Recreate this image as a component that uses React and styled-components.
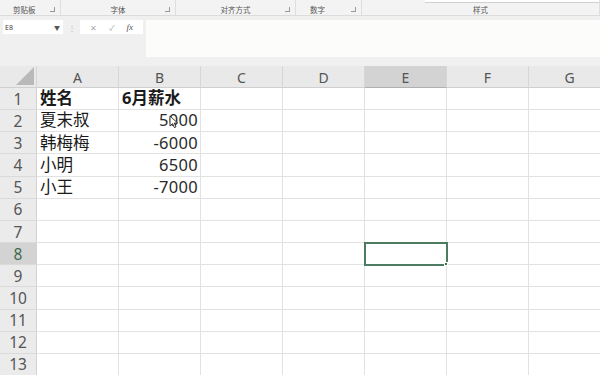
import React from "react";
import styled, { createGlobalStyle } from "styled-components";

const GlobalStyle = createGlobalStyle`
  html, body {
    margin: 0;
    padding: 0;
    width: 600px;
    height: 375px;
    overflow: hidden;
    background: #f0f0f0;
  }
  * { box-sizing: border-box; }
`;

const FONT = `"Noto Sans", "Noto Sans CJK SC", sans-serif`;
const ROW_H = 22.17;

const Window = styled.div`
  width: 600px;
  height: 375px;
  overflow: hidden;
  font-family: ${FONT};
  background: #f0f0f0;
`;

const Ribbon = styled.div`
  display: flex;
  height: 16px;
  background: #f3f3f3;
  border-bottom: 1px solid #dcdcdc;
  position: relative;
`;

const RibbonTop = styled.div`
  position: absolute;
  top: 0;
  left: 425px;
  right: 0;
  height: 3px;
  background: #fff;
  border-bottom: 1px solid #d0d0d0;
`;

const Group = styled.div`
  position: relative;
  width: ${p => p.w}px;
  border-right: 1px solid #dedede;
  display: flex;
  align-items: center;
  justify-content: ${p => (p.center ? "center" : "flex-start")};
  padding-left: ${p => p.pad || 0}px;
  font-size: 7.5px;
  color: #555;
  padding-top: 3px;
`;

const Launcher = styled.span`
  position: absolute;
  right: 5px;
  top: 7px;
  width: 5px;
  height: 5px;
  border-right: 1px solid #999;
  border-bottom: 1px solid #999;
`;

const FormulaRow = styled.div`
  display: flex;
  align-items: flex-start;
  height: 50px;
  padding: 4px 0 0 3px;
`;

const NameBox = styled.div`
  width: 60px;
  height: 14px;
  background: #fff;
  display: flex;
  align-items: center;
  justify-content: space-between;
  padding: 0 3px 0 2px;
  font-size: 7px;
  color: #444;
`;

const Caret = styled.span`
  font-size: 6px;
  color: #555;
`;

const Dots = styled.div`
  width: 17px;
  height: 14px;
  display: flex;
  align-items: center;
  justify-content: center;
  color: #b5b5b5;
  font-size: 8px;
`;

const ButtonsBox = styled.div`
  width: 63px;
  height: 14px;
  background: #fff;
  display: flex;
  align-items: center;
  justify-content: space-around;
  padding: 0 4px;
  color: #aaa;
  font-size: 8px;
`;

const Fx = styled.span`
  font-family: "Liberation Serif", serif;
  font-style: italic;
  color: #555;
  font-size: 9px;
`;

const FormulaInput = styled.div`
  margin-left: 3px;
  flex: 1;
  height: 37px;
  background: #fcfcfb;
`;

const Sheet = styled.div`
  display: grid;
  grid-template-columns: 37px repeat(7, 82px);
  grid-template-rows: 22px repeat(13, ${ROW_H}px);
  background: #fff;
  position: relative;
`;

const Corner = styled.div`
  background: #e9e9e9;
  border-right: 1px solid #d6d6d6;
  border-bottom: 1px solid #cfcfcf;
  position: relative;
  &::after {
    content: "";
    position: absolute;
    right: 2px;
    bottom: 2px;
    border-style: solid;
    border-width: 0 0 18px 18px;
    border-color: transparent transparent #b9b9b9 transparent;
  }
`;

const ColHead = styled.div`
  background: ${p => (p.active ? "#d3d3d3" : "#e9e9e9")};
  border-right: 1px solid #d6d6d6;
  border-bottom: 1px solid ${p => (p.active ? "#b0b0b0" : "#cfcfcf")};
  display: flex;
  align-items: center;
  justify-content: center;
  font-size: 14px;
  color: #555;
  padding-top: 1px;
`;

const RowHead = styled.div`
  background: ${p => (p.active ? "#d3d3d3" : "#ebebeb")};
  border-right: 1px solid #d2d2d2;
  border-bottom: 1px solid #dadada;
  display: flex;
  align-items: center;
  justify-content: center;
  font-size: 15.5px;
  color: ${p => (p.active ? "#3f6b54" : "#555")};
`;

const Cell = styled.div`
  position: relative;
  border-right: 1px solid #e2e2e2;
  border-bottom: 1px solid #e2e2e2;
  display: flex;
  align-items: center;
  justify-content: ${p => (p.num ? "flex-end" : "flex-start")};
  padding: 0 2px 0 3px;
  font-size: 16.5px;
  font-weight: ${p => (p.bold ? 700 : 400)};
  color: ${p => (p.num ? "#2a2a2a" : "#1a1a1a")};
  letter-spacing: ${p => (p.num ? "0.3px" : "0")};
  white-space: nowrap;
  line-height: 1;
  ${p =>
    p.selected &&
    `
    outline: 2px solid #4d7b62;
    outline-offset: -1px;
    z-index: 2;
  `}
`;

const Handle = styled.span`
  position: absolute;
  right: -2px;
  bottom: -2px;
  width: 4px;
  height: 4px;
  background: #3d6b52;
  border: 1px solid #fff;
`;

const Pointer = styled.svg`
  position: absolute;
  left: 50px;
  top: 5px;
  width: 10px;
  height: 14px;
`;

const cols = ["A", "B", "C", "D", "E", "F", "G"];
const data = [
  ["姓名", "6月薪水", true],
  ["夏末叔", "5000"],
  ["韩梅梅", "-6000"],
  ["小明", "6500"],
  ["小王", "-7000"],
];

export default function App() {
  const rows = [];
  for (let r = 1; r <= 13; r++) {
    const d = data[r - 1];
    rows.push(
      <RowHead key={`h${r}`} active={r === 8}>
        {r}
      </RowHead>
    );
    cols.forEach((c, ci) => {
      let content = null;
      let num = false;
      if (d && ci === 0) content = d[0];
      if (d && ci === 1) {
        content = d[1];
        num = !d[2];
      }
      const selected = r === 8 && c === "E";
      rows.push(
        <Cell key={`${c}${r}`} num={num} bold={d && d[2]} selected={selected}>
          {content}
          {r === 2 && ci === 1 && (
            <Pointer viewBox="0 0 10 14">
              <path d="M1 1 L1 11 L3.6 8.6 L5.4 12.6 L7 11.9 L5.3 8 L8.6 8 Z" fill="#fff" stroke="#222" strokeWidth="0.9" strokeLinejoin="round" />
            </Pointer>
          )}
          {selected && <Handle />}
        </Cell>
      );
    });
  }

  return (
    <Window>
      <GlobalStyle />
      <Ribbon>
        <RibbonTop />
        <Group w={61} pad={13}>剪贴板<Launcher /></Group>
        <Group w={115} center>字体<Launcher /></Group>
        <Group w={120} center>对齐方式<Launcher /></Group>
        <Group w={66} pad={14}>数字<Launcher /></Group>
        <Group w={238} center>样式</Group>
      </Ribbon>
      <FormulaRow>
        <NameBox>
          <span>E8</span>
          <Caret>▼</Caret>
        </NameBox>
        <Dots>⋮</Dots>
        <ButtonsBox>
          <span>✕</span>
          <span>✓</span>
          <Fx>fx</Fx>
        </ButtonsBox>
        <FormulaInput />
      </FormulaRow>
      <Sheet>
        <Corner />
        {cols.map(c => (
          <ColHead key={c} active={c === "E"}>
            {c}
          </ColHead>
        ))}
        {rows}
      </Sheet>
    </Window>
  );
}
